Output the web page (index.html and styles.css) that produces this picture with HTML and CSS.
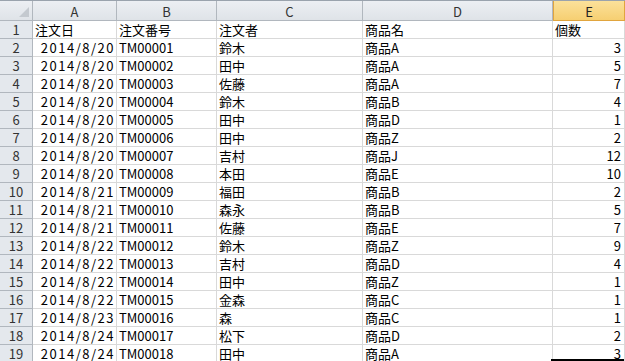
FILE: index.html
```html
<!DOCTYPE html>
<html lang="ja">
<head>
<meta charset="utf-8">
<link rel="stylesheet" href="styles.css">
</head>
<body>
<div class="sheet">
  <div class="hd corner"><span class="tri"></span></div>
  <div class="hd col">A</div>
  <div class="hd col">B</div>
  <div class="hd col">C</div>
  <div class="hd col">D</div>
  <div class="hd col sel">E</div>

  <div class="hd rn">1</div><div class="c">注文日</div><div class="c">注文番号</div><div class="c">注文者</div><div class="c">商品名</div><div class="c">個数</div>
  <div class="hd rn">2</div><div class="c r d">2014/8/20</div><div class="c">TM00001</div><div class="c">鈴木</div><div class="c">商品A</div><div class="c r">3</div>
  <div class="hd rn">3</div><div class="c r d">2014/8/20</div><div class="c">TM00002</div><div class="c">田中</div><div class="c">商品A</div><div class="c r">5</div>
  <div class="hd rn">4</div><div class="c r d">2014/8/20</div><div class="c">TM00003</div><div class="c">佐藤</div><div class="c">商品A</div><div class="c r">7</div>
  <div class="hd rn">5</div><div class="c r d">2014/8/20</div><div class="c">TM00004</div><div class="c">鈴木</div><div class="c">商品B</div><div class="c r">4</div>
  <div class="hd rn">6</div><div class="c r d">2014/8/20</div><div class="c">TM00005</div><div class="c">田中</div><div class="c">商品D</div><div class="c r">1</div>
  <div class="hd rn">7</div><div class="c r d">2014/8/20</div><div class="c">TM00006</div><div class="c">田中</div><div class="c">商品Z</div><div class="c r">2</div>
  <div class="hd rn">8</div><div class="c r d">2014/8/20</div><div class="c">TM00007</div><div class="c">吉村</div><div class="c">商品J</div><div class="c r">12</div>
  <div class="hd rn">9</div><div class="c r d">2014/8/20</div><div class="c">TM00008</div><div class="c">本田</div><div class="c">商品E</div><div class="c r">10</div>
  <div class="hd rn">10</div><div class="c r d">2014/8/21</div><div class="c">TM00009</div><div class="c">福田</div><div class="c">商品B</div><div class="c r">2</div>
  <div class="hd rn">11</div><div class="c r d">2014/8/21</div><div class="c">TM00010</div><div class="c">森永</div><div class="c">商品B</div><div class="c r">5</div>
  <div class="hd rn">12</div><div class="c r d">2014/8/21</div><div class="c">TM00011</div><div class="c">佐藤</div><div class="c">商品E</div><div class="c r">7</div>
  <div class="hd rn">13</div><div class="c r d">2014/8/22</div><div class="c">TM00012</div><div class="c">鈴木</div><div class="c">商品Z</div><div class="c r">9</div>
  <div class="hd rn">14</div><div class="c r d">2014/8/22</div><div class="c">TM00013</div><div class="c">吉村</div><div class="c">商品D</div><div class="c r">4</div>
  <div class="hd rn">15</div><div class="c r d">2014/8/22</div><div class="c">TM00014</div><div class="c">田中</div><div class="c">商品Z</div><div class="c r">1</div>
  <div class="hd rn">16</div><div class="c r d">2014/8/22</div><div class="c">TM00015</div><div class="c">金森</div><div class="c">商品C</div><div class="c r">1</div>
  <div class="hd rn">17</div><div class="c r d">2014/8/23</div><div class="c">TM00016</div><div class="c">森</div><div class="c">商品C</div><div class="c r">1</div>
  <div class="hd rn">18</div><div class="c r d">2014/8/24</div><div class="c">TM00017</div><div class="c">松下</div><div class="c">商品D</div><div class="c r">2</div>
  <div class="hd rn">19</div><div class="c r d">2014/8/24</div><div class="c">TM00018</div><div class="c">田中</div><div class="c">商品A</div><div class="c r last">3</div>
</div>
</body>
</html>
```
FILE: styles.css
```css
html, body {
  margin: 0;
  padding: 0;
  background: #fff;
  overflow: hidden;
}
.sheet {
  display: grid;
  grid-template-columns: 33px 84px 100px 146px 190px 72px;
  grid-template-rows: 20px repeat(19, 18px);
  font-family: "Noto Sans CJK JP", "Liberation Sans", sans-serif;
  font-size: 13px;
  color: #000;
  border-top: 1px solid #9aa3ad;
}
.hd {
  background: linear-gradient(#eceff3, #dfe3e8);
  border-right: 1px solid #b1b7be;
  border-bottom: 1px solid #b1b7be;
  color: #333;
  display: flex;
  align-items: center;
  justify-content: center;
  box-sizing: border-box;
  line-height: 1;
}
.corner {
  position: relative;
}
.tri {
  position: absolute;
  right: 3px;
  bottom: 3px;
  width: 0;
  height: 0;
  border-left: 10px solid transparent;
  border-bottom: 10px solid #c4c9cf;
}
.col {
  font-size: 13px;
  padding-top: 1px;
}
.sel {
  background: linear-gradient(#fbe19a, #f6cf72);
  border: 1px solid #e1a53e;
  border-top: none;
  color: #222;
}
.rn {
  background: #e4e8ed;
  font-size: 13px;
}
.c {
  border-right: 1px solid #d9d9d9;
  border-bottom: 1px solid #d9d9d9;
  box-sizing: border-box;
  display: flex;
  align-items: center;
  padding: 0 3px 0 2px;
  white-space: nowrap;
  overflow: hidden;
  line-height: 1;
}
.r {
  justify-content: flex-end;
}
.d {
  letter-spacing: 1.5px;
  padding-right: 1px;
}
.last {
  position: relative;
  overflow: visible;
}
.last::after {
  content: "";
  position: absolute;
  left: -2px;
  right: 0;
  bottom: 1px;
  height: 2px;
  background: #000;
}
```
